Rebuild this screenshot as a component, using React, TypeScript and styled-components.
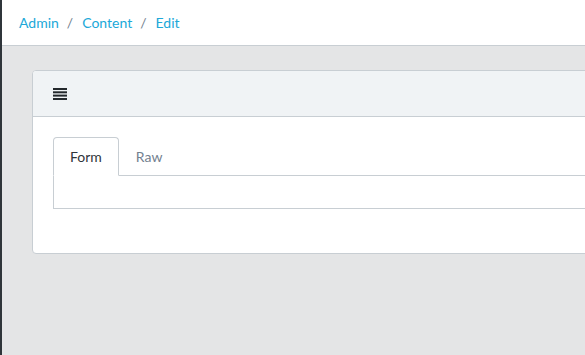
import React, {useState} from "react";
import styled, {createGlobalStyle} from "styled-components";

const GlobalStyle = createGlobalStyle`
	html, body {
		margin: 0;
		padding: 0;
		overflow: hidden;
	}

	body {
		font-family: Lato, "Open Sans", sans-serif;
		font-size: 14px;
		line-height: 1.5;
		color: #23282c;
		background: #e4e5e6;
	}
`;

const Layout = styled.div`
	display: flex;
	width: 1100px;
	height: 355px;
`;

const SidebarEdge = styled.div`
	flex: 0 0 2px;
	background: #2f353a;
`;

const Main = styled.div`
	flex: 1;
	display: flex;
	flex-direction: column;
`;

const Header = styled.header`
	height: 45px;
	display: flex;
	align-items: center;
	padding: 0 17px;
	background: #fff;
	border-bottom: 1px solid #c8ced3;
`;

const Crumbs = styled.ol`
	display: flex;
	list-style: none;
	margin: 0;
	padding: 0;
`;

const Crumb = styled.li`
	& + &::before {
		content: "/";
		color: #73818f;
		padding: 0 9px 0 8px;
	}
`;

const CrumbLink = styled.a`
	color: #20a8d8;
	text-decoration: none;
`;

const Content = styled.main`
	padding: 24px 0 0 30px;
`;

const Card = styled.section`
	background: #fff;
	border: 1px solid #c8ced3;
	border-radius: 4px;
`;

const CardHeader = styled.div`
	height: 45px;
	display: flex;
	align-items: center;
	padding: 0 20px;
	background: #f0f3f5;
	border-bottom: 1px solid #c8ced3;
	border-radius: 3px 3px 0 0;
`;

const CardBody = styled.div`
	padding: 20px 20px 44px;
`;

const TabList = styled.ul`
	display: flex;
	list-style: none;
	margin: 0;
	padding: 0;
	border-bottom: 1px solid #c8ced3;
`;

const Tab = styled.li<{$active?: boolean}>`
	margin-bottom: -1px;
	padding: 8px 16px;
	height: 21px;
	line-height: 21px;
	border: 1px solid ${p => p.$active ? "#c8ced3" : "transparent"};
	border-bottom-color: ${p => p.$active ? "#fff" : "transparent"};
	border-radius: 4px 4px 0 0;
	background: ${p => p.$active ? "#fff" : "transparent"};
	color: ${p => p.$active ? "#2f353a" : "#73818f"};
	cursor: pointer;
`;

const TabPane = styled.div`
	height: 32px;
	border: 1px solid #c8ced3;
	border-top: 0;
`;

function JustifyIcon () {
	return (
		<svg width="14" height="12" viewBox="0 0 14 12">
			<g fill="#23282c">
				<rect x="0" y="0" width="14" height="2" />
				<rect x="0" y="3.3" width="14" height="2" />
				<rect x="0" y="6.6" width="14" height="2" />
				<rect x="0" y="10" width="14" height="2" />
			</g>
		</svg>
	);
}

export default function App () {
	const [tab, setTab] = useState("form");
	return (
		<>
			<GlobalStyle />
			<Layout>
				<SidebarEdge />
				<Main>
					<Header>
						<Crumbs>
							<Crumb><CrumbLink href="#">Admin</CrumbLink></Crumb>
							<Crumb><CrumbLink href="#">Content</CrumbLink></Crumb>
							<Crumb><CrumbLink href="#">Edit</CrumbLink></Crumb>
						</Crumbs>
					</Header>
					<Content>
						<Card>
							<CardHeader>
								<JustifyIcon />
							</CardHeader>
							<CardBody>
								<TabList>
									<Tab $active={tab === "form"} onClick={() => setTab("form")}>Form</Tab>
									<Tab $active={tab === "raw"} onClick={() => setTab("raw")}>Raw</Tab>
								</TabList>
								<TabPane />
							</CardBody>
						</Card>
					</Content>
				</Main>
			</Layout>
		</>
	);
}
